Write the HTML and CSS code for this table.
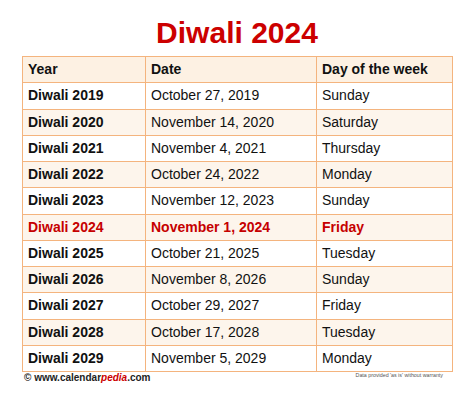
FILE: index.html
```html
<!DOCTYPE html>
<html>
<head>
<meta charset="utf-8">
<link rel="stylesheet" href="styles.css">
</head>
<body>
<div class="page">
  <h1 class="title">Diwali 2024</h1>
  <table class="dates">
    <colgroup><col class="c1"><col class="c2"><col class="c3"></colgroup>
    <thead>
      <tr class="head"><th>Year</th><th>Date</th><th>Day of the week</th></tr>
    </thead>
    <tbody>
      <tr><td class="y">Diwali 2019</td><td>October 27, 2019</td><td>Sunday</td></tr>
      <tr class="alt"><td class="y">Diwali 2020</td><td>November 14, 2020</td><td>Saturday</td></tr>
      <tr><td class="y">Diwali 2021</td><td>November 4, 2021</td><td>Thursday</td></tr>
      <tr class="alt"><td class="y">Diwali 2022</td><td>October 24, 2022</td><td>Monday</td></tr>
      <tr><td class="y">Diwali 2023</td><td>November 12, 2023</td><td>Sunday</td></tr>
      <tr class="alt cur"><td class="y">Diwali 2024</td><td>November 1, 2024</td><td>Friday</td></tr>
      <tr><td class="y">Diwali 2025</td><td>October 21, 2025</td><td>Tuesday</td></tr>
      <tr class="alt"><td class="y">Diwali 2026</td><td>November 8, 2026</td><td>Sunday</td></tr>
      <tr><td class="y">Diwali 2027</td><td>October 29, 2027</td><td>Friday</td></tr>
      <tr class="alt"><td class="y">Diwali 2028</td><td>October 17, 2028</td><td>Tuesday</td></tr>
      <tr><td class="y">Diwali 2029</td><td>November 5, 2029</td><td>Monday</td></tr>
    </tbody>
  </table>
  <div class="foot">
    <span class="site">© www.calendar<span class="pedia">pedia</span>.com</span>
    <span class="note">Data provided 'as is' without warranty</span>
  </div>
</div>
</body>
</html>
```
FILE: styles.css
```css
html, body {
  margin: 0;
  padding: 0;
  background: #ffffff;
}
body {
  font-family: "Liberation Sans", Arial, sans-serif;
  color: #111111;
}
.page {
  width: 430px;
  margin-left: 22px;
  padding-top: 16px;
}
.title {
  margin: 0 0 6px 0;
  font-size: 30px;
  line-height: 34px;
  font-weight: bold;
  color: #cc0000;
  text-align: center;
}
.dates {
  width: 430px;
  border-collapse: collapse;
  table-layout: fixed;
  font-size: 14px;
}
.c1 { width: 123px; }
.c2 { width: 171px; }
.c3 { width: 136px; }
.dates th, .dates td {
  border: 1px solid #f4b47e;
  height: 26.25px;
  padding: 0 5px 1px 5px;
  text-align: left;
  vertical-align: middle;
  box-sizing: border-box;
  white-space: nowrap;
}
.dates th {
  font-weight: bold;
}
.head {
  background: #fdf1e3;
}
.alt {
  background: #fdf5ec;
}
.y {
  font-weight: bold;
}
.cur td {
  color: #c60000;
  font-weight: bold;
}
.foot {
  display: flex;
  justify-content: space-between;
  align-items: flex-start;
  padding: 0 9px 0 2px;
}
.site {
  font-size: 10px;
  font-weight: bold;
  color: #222222;
  line-height: 12px;
}
.pedia {
  color: #cc0000;
  font-style: italic;
}
.note {
  font-size: 5.3px;
  color: #555555;
  line-height: 7px;
  padding-top: 0;
}
```
